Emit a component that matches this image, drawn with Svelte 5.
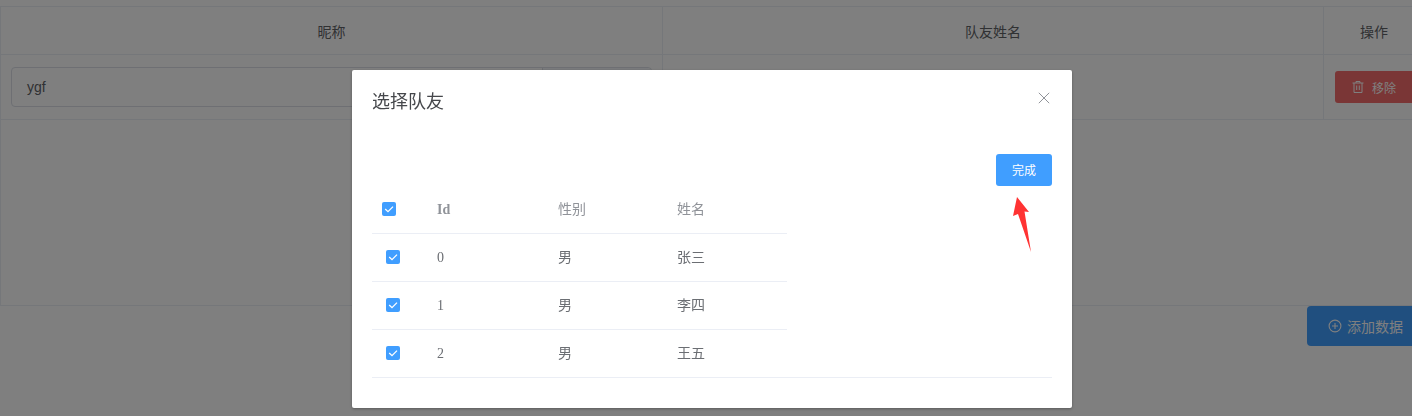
<script lang="ts">
  let rows = [
    { id: 0, sex: '男', name: '张三' },
    { id: 1, sex: '男', name: '李四' },
    { id: 2, sex: '男', name: '王五' }
  ];
</script>

{#snippet check()}
  <span class="check">
    <svg viewBox="0 0 14 14" width="14" height="14">
      <path d="M3.2 7 L6 9.7 L11 4.6" fill="none" stroke="#fff" stroke-width="1.3" />
    </svg>
  </span>
{/snippet}

<div class="page">
  <div class="team-table">
    <div class="th">昵称</div>
    <div class="th">队友姓名</div>
    <div class="th last">操作</div>
    <div class="td">
      <div class="input-group">
        <span class="input-text">ygf</span>
        <span class="input-append"></span>
      </div>
    </div>
    <div class="td"></div>
    <div class="td last">
      <button class="btn-remove">
        <svg viewBox="0 0 14 14" width="14" height="14" fill="none" stroke="currentColor" stroke-width="1">
          <path d="M1.5 3h11M5 3V1.5h4V3M3 3v9.5h8V3M5.7 5.5v4.5M8.3 5.5v4.5" />
        </svg>
        <span>移除</span>
      </button>
    </div>
    <div class="table-body"></div>
  </div>

  <div class="actions">
    <button class="btn-add">
      <svg viewBox="0 0 14 14" width="14" height="14" fill="none" stroke="currentColor" stroke-width="1.1">
        <circle cx="7" cy="7" r="5.9" />
        <path d="M7 4v6M4 7h6" />
      </svg>
      <span>添加数据</span>
    </button>
  </div>
</div>

<div class="mask"></div>

<div class="dialog">
  <header class="dialog-header">
    <span class="dialog-title">选择队友</span>
    <button class="dialog-close" aria-label="关闭">
      <svg viewBox="0 0 12 12" width="12" height="12" fill="none" stroke="#909399" stroke-width="1">
        <path d="M.8.8l10.4 10.4M11.2.8L.8 11.2" />
      </svg>
    </button>
  </header>

  <div class="dialog-body">
    <div class="toolbar">
      <button class="btn-done"><span>完成</span></button>
    </div>
    <div class="select-table">
      <div class="select-grid">
        <div class="cell head first">{@render check()}</div>
        <div class="cell head id">Id</div>
        <div class="cell head cjk">性别</div>
        <div class="cell head cjk">姓名</div>
        {#each rows as row}
          <div class="cell row-check">{@render check()}</div>
          <div class="cell">{row.id}</div>
          <div class="cell cjk">{row.sex}</div>
          <div class="cell cjk">{row.name}</div>
        {/each}
      </div>
    </div>
  </div>

  <svg class="arrow" viewBox="0 0 20 58" width="20" height="58">
    <path d="M4 1 L16 16 L11.5 15.5 L18 56 L5 18 L0 20 Z" fill="#ff3333" />
  </svg>
</div>

<style>
  :global(body) {
    margin: 0;
    overflow: hidden;
    background: #fff;
    font-family: "Liberation Sans", "Noto Sans CJK SC", sans-serif;
  }

  .page {
    width: 1412px;
    height: 416px;
    padding-top: 6px;
    box-sizing: border-box;
  }

  .team-table {
    display: grid;
    grid-template-columns: 662px 661px 100px;
    grid-template-rows: 48px 65px 185px;
    width: 1423px;
    border-top: 1px solid #ebeef5;
    border-bottom: 1px solid #ebeef5;
    box-sizing: border-box;
    border-left: 1px solid #ebeef5;
  }

  .th,
  .td {
    border-right: 1px solid #ebeef5;
    border-bottom: 1px solid #ebeef5;
    box-sizing: border-box;
  }

  .th {
    display: flex;
    align-items: center;
    justify-content: center;
    font-size: 14px;
    color: #606266;
  }

  .td {
    display: flex;
    align-items: center;
    padding: 0 10px;
  }

  .last {
    border-right: none;
  }

  .td.last {
    padding: 0 0 0 11px;
  }

  .table-body {
    grid-column: 1 / -1;
  }

  .input-group {
    display: flex;
    width: 641px;
    height: 40px;
    box-sizing: border-box;
    border: 1px solid #dcdfe6;
    border-radius: 4px;
    color: #606266;
    font-size: 14px;
  }

  .input-text {
    flex: 1;
    padding-left: 15px;
    line-height: 38px;
  }

  .input-append {
    width: 108px;
    border-left: 1px solid #dcdfe6;
    background: #f5f7fa;
    border-radius: 0 4px 4px 0;
  }

  .btn-remove {
    display: flex;
    align-items: center;
    gap: 7px;
    width: 88px;
    height: 32px;
    padding: 0 0 0 16px;
    border: none;
    border-radius: 3px;
    background: #f56c6c;
    color: #fff;
    font-family: inherit;
    font-size: 12px;
  }

  .actions {
    display: flex;
    justify-content: flex-end;
    margin: 0 -9px 0 0;
  }

  .btn-add {
    display: flex;
    align-items: center;
    gap: 5px;
    width: 114px;
    height: 40px;
    padding: 0 0 0 21px;
    border: none;
    border-radius: 4px;
    background: #409eff;
    color: #fff;
    font-family: inherit;
    font-size: 14px;
  }

  .mask {
    position: fixed;
    inset: 0;
    background: rgba(0, 0, 0, 0.5);
  }

  .dialog {
    position: fixed;
    left: 352px;
    top: 70px;
    width: 720px;
    height: 338px;
    background: #fff;
    border-radius: 2px;
    box-shadow: 0 1px 3px rgba(0, 0, 0, 0.3);
  }

  .dialog-header {
    display: flex;
    justify-content: space-between;
    padding: 20px 22px 10px 20px;
  }

  .dialog-title {
    font-size: 18px;
    line-height: 24px;
    color: #45474b;
  }

  .dialog-close {
    width: 12px;
    height: 12px;
    margin-top: 2px;
    padding: 0;
    border: none;
    background: none;
    display: flex;
  }

  .dialog-body {
    padding: 30px 20px 0;
    color: #6b6e73;
    font-size: 14px;
  }

  .toolbar {
    display: flex;
    justify-content: flex-end;
    height: 32px;
  }

  .btn-done {
    width: 56px;
    height: 32px;
    padding: 0 0 2px;
    border: none;
    border-radius: 3px;
    background: #409eff;
    color: #fff;
    font-family: inherit;
    font-size: 12px;
  }

  .select-table {
    border-bottom: 1px solid #ebeef5;
  }

  .select-grid {
    display: grid;
    grid-template-columns: 55px 121px 119px 120px;
    grid-auto-rows: 48px;
    width: 415px;
    margin-bottom: -1px;
    font-family: "Liberation Serif", "Noto Sans CJK SC", serif;
  }

  .cell {
    display: flex;
    align-items: center;
    padding-left: 10px;
    border-bottom: 1px solid #ebeef5;
    box-sizing: border-box;
  }

  .cell.cjk {
    padding-bottom: 4px;
  }

  .cell.head {
    color: #909399;
  }

  .cell.id {
    font-weight: bold;
  }

  .row-check {
    padding-left: 14px;
  }

  .cell.first,
  .cell.row-check {
    padding-bottom: 1px;
  }

  .check {
    display: block;
    width: 14px;
    height: 14px;
    border-radius: 2px;
    background: #409eff;
  }

  .check svg {
    display: block;
  }

  .arrow {
    position: absolute;
    left: 661px;
    top: 126px;
  }
</style>
